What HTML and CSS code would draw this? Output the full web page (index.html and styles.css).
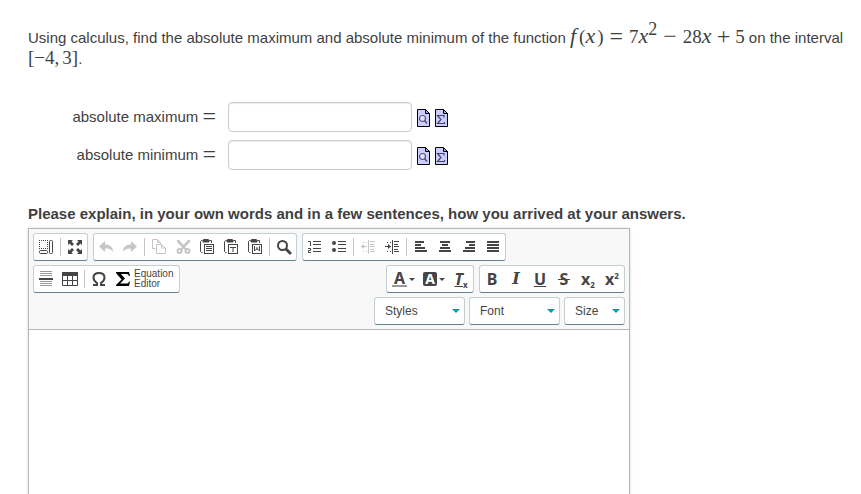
FILE: index.html
```html
<!DOCTYPE html>
<html lang="en">
<head>
<meta charset="utf-8">
<meta name="viewport" content="width=device-width, initial-scale=1">
<title>Absolute extrema</title>
<link rel="stylesheet" href="styles.css">
</head>
<body>
<svg class="defs" aria-hidden="true">
  <symbol id="page" viewBox="0 0 13 18"><path d="M.5.5H8.500L12.500 4.500V17.500H.5Z" fill="#ccccff" stroke="#000"/><path d="M8.500.5V4.500H12.500Z" fill="#aaaacc" stroke="#000"/></symbol>
  <symbol id="preview" viewBox="0 0 13 18"><use href="#page"/><circle cx="5.500" cy="9.500" r="3" fill="#e4e4ff" stroke="#55557c" stroke-width="1.200"/><path d="M7.500 11.500 10 14.500" stroke="#55557c" stroke-width="1.500"/></symbol>
  <symbol id="sigma" viewBox="0 0 13 18"><use href="#page"/><path d="M9 8.500V6.500H2.500L6 10.500 2.500 14.500H9.500V13" fill="none" stroke="#44446a" stroke-width="1.200"/></symbol>
  <symbol id="clip" viewBox="0 0 16 16"><path d="M3.500 1.500H2.500L1.500 2.500V12.500L2.500 13.500H3.500M10.500 1.500H12.500V4" fill="none" stroke="#454545"/><path d="M4 1H5V0H9V1H10V3H4Z" fill="#454545"/><rect x="5.500" y="5.500" width="9" height="9" fill="#fff" stroke="#454545"/></symbol>
</svg>
<main class="question">
  <p class="prompt">Using calculus, find the absolute maximum and absolute minimum of the function <span class="math"><i>f</i><span class="thin"></span>(<i>x</i><span class="hair"></span>)<span class="rel">=</span>7<i>x</i><sup>2</sup><span class="rel">−</span>28<i>x</i><span class="rel plus">+</span>5</span> on the interval <span class="math">[−4,<span class="thin"></span>3]</span>.</p>

  <div class="answers">
    <label for="max">absolute maximum <span class="eq">=</span></label>
    <input id="max" type="text">
    <div class="tools">
      <button type="button" aria-label="Preview maximum"><svg viewBox="0 0 13 18"><use href="#preview"/></svg></button>
      <button type="button" aria-label="Equation editor for maximum"><svg viewBox="0 0 13 18"><use href="#sigma"/></svg></button>
    </div>
    <label for="min">absolute minimum <span class="eq">=</span></label>
    <input id="min" type="text">
    <div class="tools">
      <button type="button" aria-label="Preview minimum"><svg viewBox="0 0 13 18"><use href="#preview"/></svg></button>
      <button type="button" aria-label="Equation editor for minimum"><svg viewBox="0 0 13 18"><use href="#sigma"/></svg></button>
    </div>
  </div>

  <h2 class="explain">Please explain, in your own words and in a few sentences, how you arrived at your answers.</h2>

  <section class="editor">
    <div class="toolbar">
      <div class="row">
        <div class="group">
          <button type="button" aria-label="Show blocks"><svg viewBox="0 0 16 16"><path d="M1.500 1V10M9.500 1V10" stroke-dasharray="1 1"/><path d="M1 1.500H10M1 9.500H10" stroke-dasharray="1 1"/><rect x="11.500" y="1.500" width="3" height="13" rx="1"/><rect x="1.500" y="11.500" width="8" height="3" rx="1"/></svg></button>
          <span class="sep"></span>
          <button type="button" aria-label="Maximize"><svg viewBox="0 0 16 16"><path class="f" d="M1 1H6L4.500 2.500 7 5 5 7 2.500 4.500 1 6ZM15 1H10L11.500 2.500 9 5 11 7 13.500 4.500 15 6ZM1 15H6L4.500 13.500 7 11 5 9 2.500 11.500 1 10ZM15 15H10L11.500 13.500 9 11 11 9 13.500 11.500 15 10Z"/></svg></button>
        </div>
        <div class="group">
          <button type="button" disabled aria-label="Undo"><svg viewBox="0 0 16 16"><path class="f" d="M1 7.500 7 2V5.500C12 5.500 15 8 15 13 13 10 11 9.500 7 9.500V13Z"/></svg></button>
          <button type="button" disabled aria-label="Redo"><svg viewBox="0 0 16 16"><path class="f" d="M15 7.500 9 2V5.500C4 5.500 1 8 1 13 3 10 5 9.500 9 9.500V13Z"/></svg></button>
          <span class="sep"></span>
          <button type="button" disabled aria-label="Copy"><svg viewBox="0 0 16 16"><path d="M4.500 9.500H1.500V.5H6.500L9.500 3.500V5M6.500.5V3.500H9.500M5.500 5.500H10.500L14.500 9V14.500H5.500ZM10.500 5.500V9H14.500"/></svg></button>
          <button type="button" disabled aria-label="Cut"><svg viewBox="0 0 16 16"><path class="f" d="M2 1 4 1 8.500 6 13 1 15 1 15 3 10 8 12 10.500 10.500 12 8.500 9.500 6.500 12 5 10.500 7 8 2 3Z"/><circle cx="4.500" cy="12" r="2" class="w"/><circle cx="12.500" cy="12" r="2" class="w"/></svg></button>
          <button type="button" aria-label="Paste"><svg viewBox="0 0 16 16"><use href="#clip"/><path d="M7 7.500H13M7 9.500H13M7 11.500H13"/></svg></button>
          <button type="button" aria-label="Paste as plain text"><svg viewBox="0 0 16 16"><use href="#clip"/><path d="M7 8.500H13M10 8V13"/></svg></button>
          <button type="button" aria-label="Paste from Word"><svg viewBox="0 0 16 16"><use href="#clip"/><path d="M7.500 7V12L10 9.500 12.500 12V7M10 8V11"/></svg></button>
          <span class="sep"></span>
          <button type="button" aria-label="Find"><svg viewBox="0 0 16 16"><circle cx="6.500" cy="6.500" r="4.500" class="w"/><path class="heavy" d="M10.500 10.500 14 14"/></svg></button>
        </div>
        <div class="group">
          <button type="button" aria-label="Numbered list"><svg viewBox="0 0 16 16"><path d="M1 2.500H3.500V7M1 9.500H3.500V11.500H1.500V13.500H4M6 2.500H14M6 5.500H14M6 9.500H14M6 12.500H14"/></svg></button>
          <button type="button" aria-label="Bulleted list"><svg viewBox="0 0 16 16"><circle class="f" cx="3" cy="4" r="2"/><circle class="f" cx="3" cy="11" r="2"/><path d="M7 2.500H15M7 5.500H15M7 9.500H15M7 12.500H15"/></svg></button>
          <span class="sep"></span>
          <button type="button" disabled aria-label="Decrease indent"><svg viewBox="0 0 16 16"><path d="M8.500 1V15M10 2.500H15M10 5.500H14M10 7.500H15M10 10.500H14M10 12.500H15M1 7.500H7M3 3.500H4M6 3.500H7M3 12.500H4M6 12.500H7"/><path class="f" d="M4 5 1 7.500 4 10Z"/></svg></button>
          <button type="button" aria-label="Increase indent"><svg viewBox="0 0 16 16"><path d="M8.500 1V15M10 2.500H15M10 5.500H14M10 7.500H15M10 10.500H14M10 12.500H15M1 7.500H7M3 3.500H4M6 3.500H7M3 12.500H4M6 12.500H7"/><path class="f" d="M4 5 7 7.500 4 10Z"/></svg></button>
          <span class="sep"></span>
          <button type="button" aria-label="Align left"><svg viewBox="0 0 16 16"><path class="f" d="M2 2H11V4H2ZM2 5H8V7H2ZM2 8H12V10H2ZM2 11H14V13H2Z"/></svg></button>
          <button type="button" aria-label="Center"><svg viewBox="0 0 16 16"><path class="f" d="M3 2H13V4H3ZM5 5H11V7H5ZM3 8H13V10H3ZM2 11H14V13H2Z"/></svg></button>
          <button type="button" aria-label="Align right"><svg viewBox="0 0 16 16"><path class="f" d="M5 2H14V4H5ZM8 5H14V7H8ZM4 8H14V10H4ZM2 11H14V13H2Z"/></svg></button>
          <button type="button" aria-label="Justify"><svg viewBox="0 0 16 16"><path class="f" d="M2 2H14V4H2ZM2 5H14V7H2ZM2 8H14V10H2ZM2 11H14V13H2Z"/></svg></button>
        </div>
      </div>
      <div class="row split">
        <div class="group">
          <button type="button" aria-label="Horizontal line"><svg viewBox="0 0 16 16"><path class="pale" d="M2 .5H14M2 2.500H14M2 4.500H14M2 10.500H14M2 12.500H14M2 14.500H14"/><path class="f" d="M1 7H15V9H1Z"/></svg></button>
          <button type="button" aria-label="Table"><svg viewBox="0 0 16 16"><path class="f" d="M0 1H16V5H0Z"/><path d="M.5 4V14.500H15.500V4M0 9.500H16M5.500 4V15M10.500 4V15"/></svg></button>
          <span class="sep"></span>
          <button type="button" aria-label="Special character"><svg viewBox="0 0 16 16"><path class="w" d="M2 14H6V12C3.500 10.500 2.500 9 2.500 6.500 2.500 3.500 5 2 8 2S13.500 3.500 13.500 6.500C13.500 9 12.500 10.500 10 12V14H14"/></svg></button>
          <button type="button" class="equation"><svg viewBox="0 0 16 16"><path fill="#000" d="M1 1H14L15 5H14C13 3 12 3 10 3H6L10 7.500 5 12.500H11C13 12.500 13.500 12 14 10.500H15L14 15H1V14L6.500 8.500 1 2Z"/></svg><span>Equation<br>Editor</span></button>
        </div>
        <div class="cluster">
          <div class="group">
            <button type="button" class="color" aria-label="Text color"><span class="glyph fore">A</span><span class="caret"></span></button>
            <button type="button" class="color" aria-label="Background color"><span class="glyph back">A</span><span class="caret"></span></button>
            <button type="button" aria-label="Remove format"><span class="glyph clear"><i>T</i><sub>x</sub></span></button>
          </div>
          <div class="group">
            <button type="button"><b class="glyph">B</b></button>
            <button type="button"><i class="glyph serif">I</i></button>
            <button type="button"><u class="glyph">U</u></button>
            <button type="button"><s class="glyph">&hairsp;S&hairsp;</s></button>
            <button type="button"><span class="glyph">x<sub>2</sub></span></button>
            <button type="button"><span class="glyph">x<sup>2</sup></span></button>
          </div>
        </div>
      </div>
      <div class="row combos">
        <div class="combo"><select aria-label="Styles"><option>Styles</option></select></div>
        <div class="combo"><select aria-label="Font"><option>Font</option></select></div>
        <div class="combo small"><select aria-label="Size"><option>Size</option></select></div>
      </div>
    </div>
    <textarea class="content" aria-label="Explanation"></textarea>
  </section>
</main>
</body>
</html>
```
FILE: styles.css
```css
* { box-sizing: border-box; }
body {
  margin: 0;
  height: 100vh;
  overflow: hidden;
  background: #fff;
  color: #3f3f3f;
  font: 15px/20px "Liberation Sans", Arial, sans-serif;
}
.defs { display: none; }
.question { padding: 27px 12px 0 28px; }
.prompt { margin: 0; }
.math {
  font: 19px/20px "Liberation Serif", "Times New Roman", serif;
  white-space: nowrap;
}
.math i { font-size: 22px; line-height: 16px; }
.math sup { font-size: 18px; line-height: 0; vertical-align: 8px; }
.rel { margin: 0 6px; font-size: 24px; line-height: 16px; vertical-align: -1px; }
.plus { margin: 0 5px; }
.thin { display: inline-block; width: 3px; }
.hair { display: inline-block; width: 2px; }

.answers {
  display: grid;
  grid-template-columns: 188px 184px max-content;
  gap: 8px 12px;
  margin-top: 33px;
  align-items: center;
}
.answers label { text-align: right; }
.eq { font-family: "Liberation Serif", serif; font-size: 24px; line-height: 16px; vertical-align: -2px; }
.answers input {
  width: 100%;
  height: 30px;
  padding: 4px 6px;
  border: 1px solid #ccc;
  border-radius: 4px;
  box-shadow: inset 0 1px 1px rgba(0, 0, 0, .08);
  font: inherit;
}
.tools { display: flex; gap: 5px; margin-left: -7px; padding-top: 2px; }
button {
  padding: 0;
  border: 0;
  background: none;
  color: #454545;
  font: inherit;
}
.tools svg { display: block; width: 13px; height: 18px; }

.explain { margin: 34px 0 4px; font-size: 15px; line-height: 20px; }

.editor {
  max-width: 602px;
  border: 1px solid #b6b6b6;
  box-shadow: 0 0 3px rgba(0, 0, 0, .15);
}
.toolbar {
  display: flex;
  flex-direction: column;
  gap: 4px;
  padding: 4px;
  background: #f8f8f8;
  border-bottom: 1px solid #b6b6b6;
}
.row, .cluster { display: flex; gap: 5px; }
.split { justify-content: space-between; }
.group {
  display: flex;
  align-items: center;
  height: 28px;
  border: 1px solid #c4cfd3;
  border-bottom-color: #5f8190;
  border-radius: 3px;
  background: #fff;
}
.group button {
  display: flex;
  align-items: center;
  justify-content: center;
  width: 24px;
  height: 26px;
}
.group button:disabled { opacity: .3; }
.group svg {
  width: 16px;
  height: 16px;
  fill: none;
  stroke: #454545;
}
.group svg .f { fill: #454545; stroke: none; }
.group svg .w { stroke-width: 2; }
.group svg .heavy { stroke-width: 3; stroke-linecap: round; }
.group svg .pale { stroke: #999; }
.sep { width: 1px; height: 18px; margin: 0 2px; background: #c4c4c4; }
.group .equation {
  width: 68px;
  justify-content: flex-start;
  gap: 3px;
  padding-left: 4px;
  font-size: 10px;
  line-height: 10px;
  text-align: left;
}
.group .equation svg { stroke: none; }
.group .color { width: 31px; justify-content: flex-start; gap: 2px; padding-left: 5px; }
.caret {
  border: 3px solid transparent;
  border-top-color: #454545;
  border-bottom: 0;
}
.glyph { font: bold 16px/16px "Noto Sans", "DejaVu Sans", sans-serif; white-space: nowrap; }
.glyph sub, .glyph sup { font-size: 8px; line-height: 0; }
.glyph sub { vertical-align: -3px; }
.glyph sup { vertical-align: 6px; }
s.glyph { white-space: pre; }
.serif { font-family: "DejaVu Serif", serif; font-style: italic; }
.fore { width: 15px; height: 16px; line-height: 14px; border-bottom: 2px solid #999; text-align: center; }
.back { width: 14px; height: 14px; border-radius: 2px; background: #454545; color: #fff; font-size: 14px; line-height: 14px; text-align: center; }
.clear i { text-decoration: underline; }

.combos { justify-content: flex-end; gap: 4px; }
.combo { position: relative; width: 91px; }
.combo.small { width: 61px; }
.combo select {
  display: block;
  appearance: none;
  width: 100%;
  height: 28px;
  padding: 0 10px;
  border: 1px solid #c4cfd3;
  border-bottom-color: #5f8190;
  border-radius: 3px;
  background: #fff;
  color: #454545;
  font: 12px "Liberation Sans", Arial, sans-serif;
}
.combo::after {
  content: "";
  position: absolute;
  right: 5px;
  top: 12px;
  border: 4px solid transparent;
  border-top-color: #0d95bd;
  border-bottom: 0;
  pointer-events: none;
}
.content {
  display: block;
  width: 100%;
  min-height: 200px;
  padding: 20px;
  border: 0;
  resize: none;
  background: #fff;
  font: inherit;
}
```
